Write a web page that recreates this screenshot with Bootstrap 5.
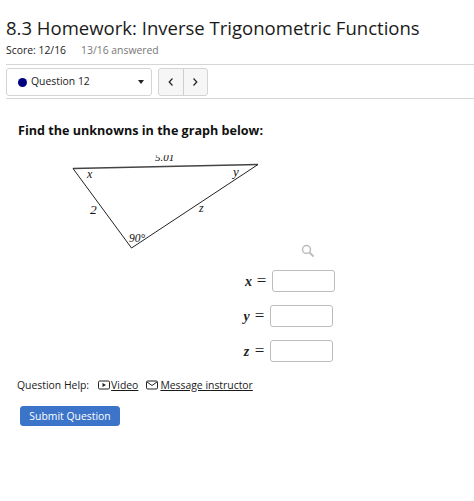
<!DOCTYPE html>
<html lang="en">
<head>
<meta charset="utf-8">
<title>8.3 Homework</title>
<link rel="stylesheet" href="https://cdn.jsdelivr.net/npm/bootstrap@5.3.0/dist/css/bootstrap.min.css">
<style>
html,body{height:501px;overflow:hidden}
body{font-family:"Open Sans",sans-serif;color:#1a1a1a;background:#fff}
.hw-page{padding:14px 0 0 6px}
.hw-title{font-size:18.55px;line-height:28px;font-weight:400;margin:0;white-space:nowrap}
.hw-score{font-size:10.4px;line-height:16px;gap:15px}
.hw-muted{color:#767676}
.hw-rule{height:1px;background:#d6d6d6}
.hw-rule-top{margin-top:6px}
.hw-nav{padding:3px 0 2px;gap:6px}
.hw-select{width:146px;height:28px;border:1px solid #d4d4d4;border-radius:3px;padding:0 7px 0 11px;font-size:10.4px;gap:4px;background:#fff}
.hw-dot{width:9px;height:9px;border-radius:50%;background:#000080}
.hw-caret{width:0;height:0;border-left:3.5px solid transparent;border-right:3.5px solid transparent;border-top:4px solid #222}
.hw-pager{height:28px;width:50px;border:1px solid #d4d4d4;border-radius:3px;background:#f6f6f6;overflow:hidden}
.hw-pager span{flex:1;display:flex;align-items:center;justify-content:center}
.hw-pager span+span{border-left:1px solid #cfcfcf}
.hw-body{padding:0 0 0 12px}
.hw-question{font-size:12.6px;line-height:18px;font-weight:700;margin:23px 0 15px;color:#111}
.hw-figure{display:block;margin-left:32px;flex:none}
.hw-search{display:block;margin:89px 0 0 21px;flex:none}
.hw-eqs{margin:12px 0 0 225px;gap:13px}
.hw-eq{height:22px;font-family:"Liberation Serif",serif;font-size:14px;color:#222}
.hw-var{font-style:italic;font-weight:700;width:7px;text-align:center}
.hw-eq1{padding-left:2px}
.hw-eqs-sign{margin:0 5px 0 4px;font-size:17px;line-height:22px;width:11px;text-align:center}
.hw-input{width:63px;height:22px;border:1px solid #bdbdbd;border-radius:3px;background:#fff}
.hw-help{font-size:10.4px;line-height:16px;margin:15px 0 0 -1px;color:#1a1a1a;white-space:nowrap}
.hw-help a{color:#1a1a1a;text-decoration:underline}
.hw-helplabel{margin-right:9px}
.hw-gap{margin:0 2px 0 8px}
.hw-gap-v{margin-right:1px}
.hw-submit{--bs-btn-bg:#3b74c9;--bs-btn-border-color:#3b74c9;--bs-btn-hover-bg:#3b74c9;--bs-btn-hover-border-color:#3b74c9;font-size:10.4px;line-height:16px;padding:1px 0;border-radius:3px;margin:13px 0 0 2px;width:100px;display:block;white-space:nowrap}
.hw-tri text{font-family:"Liberation Serif",serif;font-style:italic;fill:#111}
</style>
</head>
<body>
<main class="hw-page">
  <h1 class="hw-title">8.3 Homework: Inverse Trigonometric Functions</h1>
  <div class="hw-score d-flex"><span>Score: 12/16</span><span class="hw-muted">13/16 answered</span></div>
  <div class="hw-rule hw-rule-top"></div>
  <div class="hw-nav d-flex">
    <div class="hw-select d-flex align-items-center"><span class="hw-dot"></span><span class="flex-grow-1">Question 12</span><span class="hw-caret"></span></div>
    <div class="hw-pager d-flex">
      <span><svg width="8" height="10" viewBox="0 0 8 10"><path d="M5.5 1.5 2.2 5l3.3 3.5" fill="none" stroke="#222" stroke-width="1.2"/></svg></span>
      <span><svg width="8" height="10" viewBox="0 0 8 10"><path d="M2.5 1.5 5.8 5 2.5 8.5" fill="none" stroke="#222" stroke-width="1.2"/></svg></span>
    </div>
  </div>
  <div class="hw-rule"></div>
  <div class="hw-body">
    <p class="hw-question">Find the unknowns in the graph below:</p>
    <div class="d-flex">
      <svg class="hw-figure hw-tri" width="230" height="95" viewBox="0 0 230 95">
        <path d="M23 13.5 208 9.5" stroke="#444" stroke-width="1.4" fill="none"/>
        <path d="M23 13.5 81.5 93 208 9.5" stroke="#222" stroke-width="1" fill="none"/>
        <text x="105" y="6" font-size="11">5.01</text>
        <text x="37" y="23" font-size="12">x</text>
        <text x="183" y="21" font-size="13">y</text>
        <text x="149" y="57" font-size="12">z</text>
        <text x="40" y="59" font-size="13.5">2</text>
        <text x="79" y="86.5" font-size="11.5">90°</text>
      </svg>
      <svg class="hw-search" width="14" height="14" viewBox="0 0 14 14"><circle cx="5.5" cy="5.5" r="4" fill="none" stroke="#bcbcbc" stroke-width="1.5"/><path d="M8.5 8.5 12.5 12.5" stroke="#bcbcbc" stroke-width="2"/></svg>
    </div>
    <div class="hw-eqs d-flex flex-column">
      <div class="hw-eq hw-eq1 d-flex align-items-center"><span class="hw-var">x</span><span class="hw-eqs-sign">=</span><span class="hw-input"></span></div>
      <div class="hw-eq d-flex align-items-center"><span class="hw-var">y</span><span class="hw-eqs-sign">=</span><span class="hw-input"></span></div>
      <div class="hw-eq d-flex align-items-center"><span class="hw-var">z</span><span class="hw-eqs-sign">=</span><span class="hw-input"></span></div>
    </div>
    <div class="hw-help d-flex align-items-center">
      <span class="hw-helplabel">Question Help:</span>
      <svg class="hw-gap-v" width="12" height="10" viewBox="0 0 12 10"><rect x=".5" y="1" width="11" height="8" rx="1.2" fill="none" stroke="#222"/><path d="M4.5 3 8 5 4.5 7z" fill="#222"/></svg>
      <a href="#">Video</a>
      <svg class="hw-gap" width="12" height="10" viewBox="0 0 12 10"><rect x=".5" y="1" width="11" height="8" rx="1.2" fill="none" stroke="#222"/><path d="M1 2 6 5.5 11 2" fill="none" stroke="#222"/></svg>
      <a href="#">Message instructor</a>
    </div>
    <button class="btn btn-primary hw-submit" type="button">Submit Question</button>
  </div>
</main>
<script src="https://cdn.jsdelivr.net/npm/bootstrap@5.3.0/dist/js/bootstrap.bundle.min.js"></script>
</body>
</html>
